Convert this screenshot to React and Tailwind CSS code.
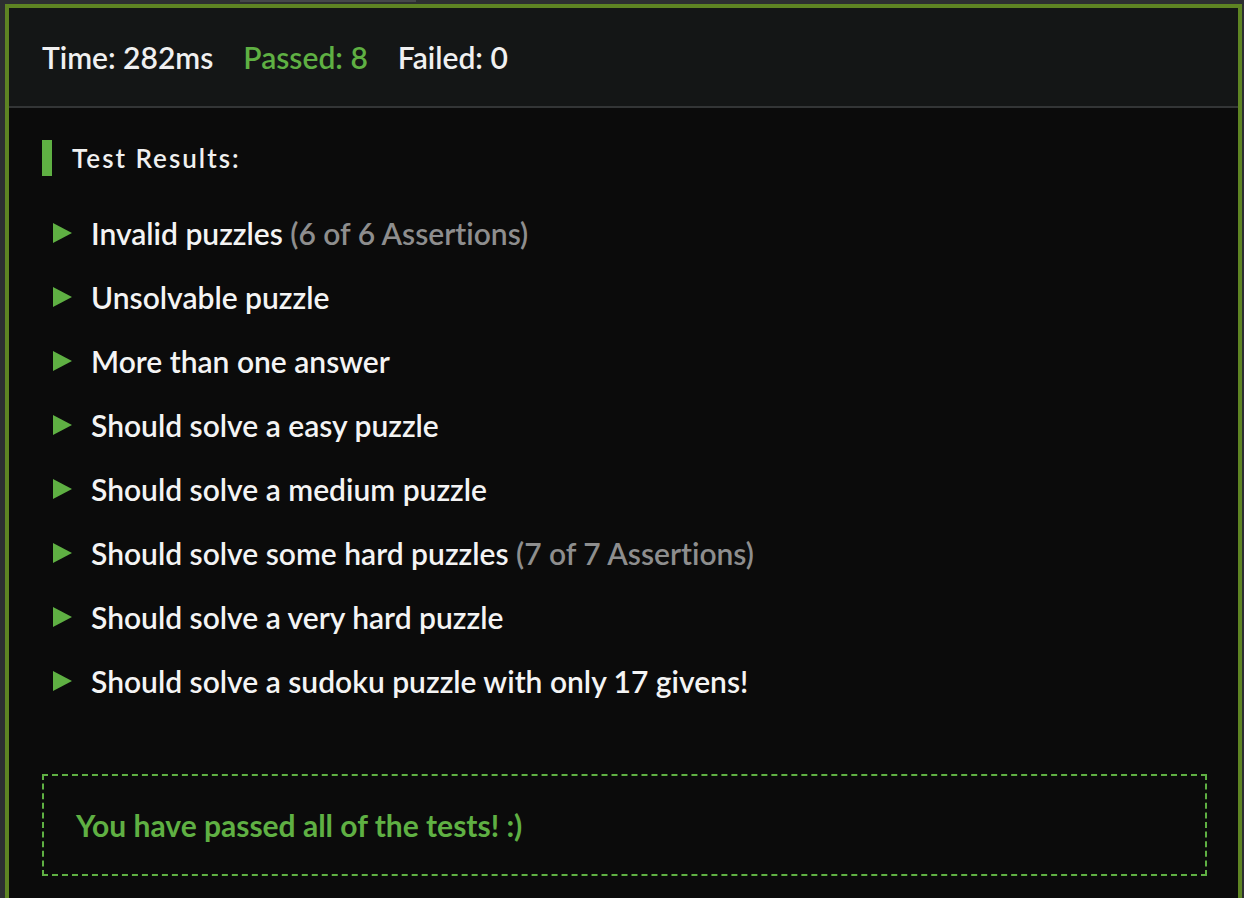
export default function App() {
  const items = [
    { t: "Invalid puzzles", a: "(6 of 6 Assertions)" },
    { t: "Unsolvable puzzle" },
    { t: "More than one answer" },
    { t: "Should solve a easy puzzle" },
    { t: "Should solve a medium puzzle" },
    { t: "Should solve some hard puzzles", a: "(7 of 7 Assertions)" },
    { t: "Should solve a very hard puzzle" },
    { t: "Should solve a sudoku puzzle with only 17 givens!" },
  ];
  return (
    <div
      className="w-full h-[898px] overflow-hidden bg-[#2d2f31] pl-[5px] pr-[2px] [font-variant-ligatures:none]"
      style={{ fontFamily: "Lato, 'Open Sans', sans-serif" }}
    >
      <div className="h-[4px] flex">
        <div className="ml-[235px] w-[176px] h-[2px] bg-[#45484a]" />
      </div>
      <div className="border-4 border-[#5e8423] h-[920px] flex flex-col bg-[#0b0b0b]">
        <div className="h-[100px] shrink-0 bg-[#141616] border-b-2 border-[#333536] flex items-center px-[33px] gap-[30px] text-[30px] font-semibold">
          <span className="text-[#f0f0f0]">Time: 282ms</span>
          <span className="text-[#5fb043]">Passed: 8</span>
          <span className="text-[#f0f0f0]">Failed: 0</span>
        </div>
        <div className="pl-[33px] pr-[31px] pt-[32px]">
          <div className="flex items-center h-[36px]">
            <div className="w-[10px] h-[36px] bg-[#5fb043]" />
            <span className="ml-[20px] text-[26px] font-semibold text-[#f0f0f0] tracking-[2px]">
              Test Results:
            </span>
          </div>
          <div className="mt-[25px] flex flex-col">
            {items.map((it, i) => (
              <div key={i} className="flex items-center h-[64px]">
                <svg width="19" height="20" viewBox="0 0 19 20" className="ml-[11px] shrink-0">
                  <polygon points="0,0 19,10 0,20" fill="#5fb043" />
                </svg>
                <span className="ml-[19px] text-[30px] font-semibold text-[#f4f4f4]">
                  {it.t}
                  {it.a && <span className="text-[#8e8e8e]"> {it.a}</span>}
                </span>
              </div>
            ))}
          </div>
          <div className="mt-[61px] h-[102px] border-2 border-dashed border-[#5fb043] flex items-center pl-[32px]">
            <span className="text-[30px] font-bold text-[#5fb043]">
              You have passed all of the tests! :)
            </span>
          </div>
        </div>
      </div>
    </div>
  );
}
